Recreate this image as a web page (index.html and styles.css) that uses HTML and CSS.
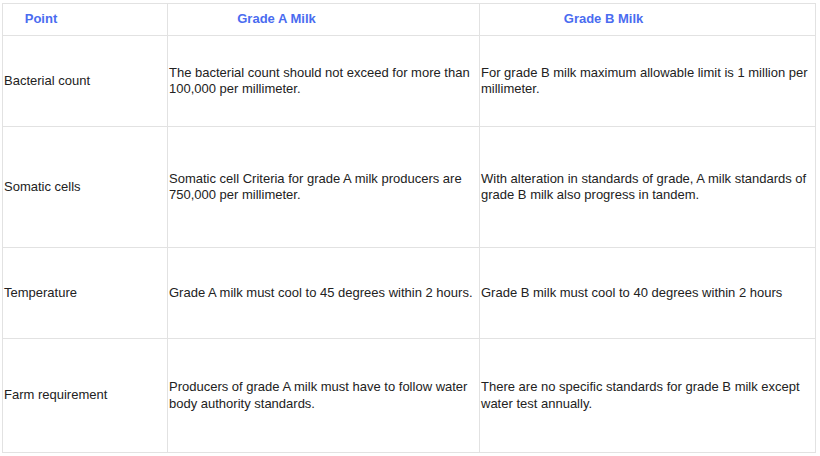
FILE: index.html
```html
<!DOCTYPE html>
<html>
<head>
<meta charset="utf-8">
<link rel="stylesheet" href="styles.css">
</head>
<body>
<table class="milk">
  <colgroup>
    <col class="c1">
    <col class="c2">
    <col class="c3">
  </colgroup>
  <thead>
    <tr class="head">
      <th>Point</th>
      <th class="th-a">Grade A Milk</th>
      <th>Grade B Milk</th>
    </tr>
  </thead>
  <tbody>
    <tr class="r1">
      <td>Bacterial count</td>
      <td>The bacterial count should not exceed for more than 100,000 per millimeter.</td>
      <td>For grade B milk maximum allowable limit is 1 million per millimeter.</td>
    </tr>
    <tr class="r2">
      <td>Somatic cells</td>
      <td>Somatic cell Criteria for grade A milk producers are 750,000 per millimeter.</td>
      <td>With alteration in standards of grade, A milk standards of grade B milk also progress in tandem.</td>
    </tr>
    <tr class="r3">
      <td>Temperature</td>
      <td>Grade A milk must cool to 45 degrees within 2 hours.</td>
      <td>Grade B milk must cool to 40 degrees within 2 hours</td>
    </tr>
    <tr class="r4">
      <td>Farm requirement</td>
      <td>Producers of grade A milk must have to follow water body authority standards.</td>
      <td>There are no specific standards for grade B milk except water test annually.</td>
    </tr>
  </tbody>
</table>
</body>
</html>
```
FILE: styles.css
```css
html, body {
  margin: 0;
  padding: 0;
  background: #ffffff;
}
body {
  font-family: "Liberation Sans", Arial, sans-serif;
  font-size: 13px;
  color: #222222;
}
.milk {
  margin: 3px 0 0 2px;
  border-collapse: collapse;
  table-layout: fixed;
  width: 813px;
}
.c1 { width: 165px; }
.c2 { width: 312px; }
.c3 { width: 336px; }
.milk th,
.milk td {
  border: 1px solid #e2e2e2;
  vertical-align: middle;
  line-height: 16.5px;
}
.milk th {
  color: #4a6cf0;
  font-weight: bold;
  text-align: center;
  padding: 0 88px 0 0;
}
.milk th.th-a {
  padding-right: 94px;
}
.milk td {
  text-align: left;
  padding: 0 1px;
}
.head { height: 32px; }
.r1 { height: 91px; }
.r2 { height: 121px; }
.r3 { height: 91px; }
.r4 { height: 114px; }
```
